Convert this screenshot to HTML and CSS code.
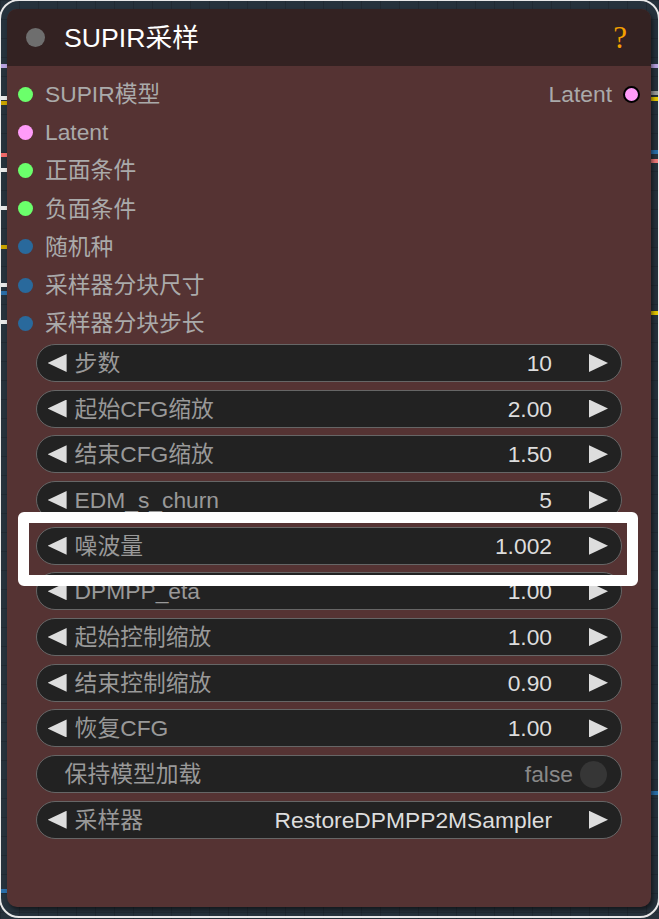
FILE: index.html
```html
<!DOCTYPE html>
<html>
<head>
  <title>SUPIR采样</title>
  <link rel="stylesheet" href="styles.css">
</head>
<body>
  <div class="canvas">
    <!-- wire stubs peeking out behind the node -->
    <div class="wire wl" style="top:64px;background:#b9a3e0"></div>
    <div class="wire wl" style="top:96px;background:#e8e8e8"></div>
    <div class="wire wl" style="top:101px;background:#c9a400"></div>
    <div class="wire wl" style="top:153px;background:#f06a6a"></div>
    <div class="wire wl" style="top:168px;background:#e8e8e8"></div>
    <div class="wire wl" style="top:206px;background:#e8e8e8"></div>
    <div class="wire wl" style="top:245px;background:#c9a400"></div>
    <div class="wire wl" style="top:283px;background:#e8e8e8"></div>
    <div class="wire wl" style="top:291px;background:#2a6ea8"></div>
    <div class="wire wl" style="top:320px;background:#e8e8e8"></div>
    <div class="wire wl" style="top:889px;background:#2a6ea8"></div>
    <div class="wire wr" style="top:64px;background:#b9a3e0"></div>
    <div class="wire wr" style="top:91px;background:#9a9a9a"></div>
    <div class="wire wr" style="top:97px;background:#e6c800"></div>
    <div class="wire wr" style="top:150px;background:#2a6ea8"></div>
    <div class="wire wr" style="top:159px;background:#f07a7a"></div>
    <div class="wire wr" style="top:311px;background:#e6c800"></div>
    <div class="wire wr" style="top:791px;background:#2a6ea8"></div>

    <div class="node">
      <div class="node-title">
        <span class="title-dot"></span>
        <span class="title-text">SUPIR采样</span>
        <span class="help">?</span>
      </div>

      <div class="slots">
        <div class="slot">
          <span class="dot green"></span><span class="slot-label">SUPIR模型</span>
          <span class="out-label">Latent</span><span class="dot pink out"></span>
        </div>
        <div class="slot"><span class="dot pink"></span><span class="slot-label">Latent</span></div>
        <div class="slot"><span class="dot green"></span><span class="slot-label">正面条件</span></div>
        <div class="slot"><span class="dot green"></span><span class="slot-label">负面条件</span></div>
        <div class="slot"><span class="dot blue"></span><span class="slot-label">随机种</span></div>
        <div class="slot"><span class="dot blue"></span><span class="slot-label">采样器分块尺寸</span></div>
        <div class="slot"><span class="dot blue"></span><span class="slot-label">采样器分块步长</span></div>
      </div>

      <div class="widgets">
        <div class="widget"><span class="arrow left"></span><span class="w-label">步数</span><span class="w-value">10</span><span class="arrow right"></span></div>
        <div class="widget"><span class="arrow left"></span><span class="w-label">起始CFG缩放</span><span class="w-value">2.00</span><span class="arrow right"></span></div>
        <div class="widget"><span class="arrow left"></span><span class="w-label">结束CFG缩放</span><span class="w-value">1.50</span><span class="arrow right"></span></div>
        <div class="widget"><span class="arrow left"></span><span class="w-label">EDM_s_churn</span><span class="w-value">5</span><span class="arrow right"></span></div>
        <div class="widget"><span class="arrow left"></span><span class="w-label">噪波量</span><span class="w-value">1.002</span><span class="arrow right"></span></div>
        <div class="widget"><span class="arrow left"></span><span class="w-label">DPMPP_eta</span><span class="w-value">1.00</span><span class="arrow right"></span></div>
        <div class="widget"><span class="arrow left"></span><span class="w-label">起始控制缩放</span><span class="w-value">1.00</span><span class="arrow right"></span></div>
        <div class="widget"><span class="arrow left"></span><span class="w-label">结束控制缩放</span><span class="w-value">0.90</span><span class="arrow right"></span></div>
        <div class="widget"><span class="arrow left"></span><span class="w-label">恢复CFG</span><span class="w-value">1.00</span><span class="arrow right"></span></div>
        <div class="widget toggle"><span class="w-label">保持模型加载</span><span class="t-value">false</span><span class="knob"></span></div>
        <div class="widget"><span class="arrow left"></span><span class="w-label">采样器</span><span class="w-value">RestoreDPMPP2MSampler</span><span class="arrow right"></span></div>
      </div>
    </div>

    <div class="highlight"></div>
  </div>
</body>
</html>
```

FILE: styles.css
```css
body {
  margin: 0;
  padding: 0;
  background-color: #26323c;
  background-image:
    linear-gradient(rgba(0, 0, 0, 0.14) 1px, transparent 1px),
    linear-gradient(90deg, rgba(0, 0, 0, 0.14) 1px, transparent 1px);
  background-size: 19px 19px;
  font-family: "Liberation Sans", Arial, "Noto Sans CJK SC", sans-serif;
  overflow: hidden;
}

.canvas {
  position: relative;
  width: 659px;
  height: 919px;
  padding: 9px 0 0 7px;
  box-sizing: border-box;
  overflow: hidden;
}

.wire {
  position: absolute;
  height: 4px;
  width: 8px;
}

.wl { left: 0; }
.wr { right: 0; }

.node {
  position: relative;
  width: 644px;
  height: 898px;
  background-color: #553333;
  border-radius: 10px;
  box-shadow: 2px 3px 4px rgba(0, 0, 0, 0.5);
}

/* selection outline */
.node::before {
  content: "";
  position: absolute;
  top: -10px;
  left: -8px;
  right: -9px;
  bottom: -11px;
  border: 2px solid #e8e8e8;
  border-radius: 20px;
}

.node-title {
  display: flex;
  align-items: center;
  height: 57px;
  background-color: #332222;
  border-radius: 10px 10px 0 0;
  padding: 0 24px 0 19px;
}

.title-dot {
  width: 19px;
  height: 19px;
  border-radius: 50%;
  background-color: #6e6e6e;
}

.title-text {
  flex: 1;
  margin-left: 19px;
  font-size: 26.7px;
  line-height: 30px;
  color: #fff;
}

.help {
  font-family: "Liberation Serif", "Times New Roman", serif;
  font-size: 31px;
  line-height: 30px;
  color: #f5a000;
}

.slots {
  padding-top: 9px;
}

.slot {
  display: flex;
  align-items: center;
  height: 38.2px;
  padding: 0 11px 0 11px;
  font-size: 22.8px;
  line-height: 26px;
  color: #aaa;
}

.dot {
  width: 15px;
  height: 15px;
  border-radius: 50%;
  flex-shrink: 0;
}

.green { background-color: #6bff6b; }
.pink { background-color: #ff9cf9; }
.blue { background-color: #29699c; }

.slot-label {
  flex: 1;
  margin-left: 12px;
}

.out-label {
  margin-right: 11px;
}

.dot.out {
  width: 13px;
  height: 13px;
  border: 2px solid #000;
  margin-right: 0;
}

.widgets {
  display: flex;
  flex-direction: column;
  gap: 7.7px;
  margin-top: 1.6px;
  padding: 0 29px 0 28.6px;
}

.widget {
  display: flex;
  align-items: center;
  height: 38px;
  box-sizing: border-box;
  border: 1px solid #666;
  border-radius: 19px;
  background-color: #222;
  padding: 0 13px 0 11px;
  font-size: 22.8px;
  line-height: 26px;
}

.arrow {
  width: 19px;
  height: 18px;
  background-color: #ddd;
  flex-shrink: 0;
}

.arrow.left {
  clip-path: polygon(0 50%, 100% 0, 100% 100%);
}

.arrow.right {
  clip-path: polygon(0 0, 100% 50%, 0 100%);
  margin-left: 37px;
}

.w-label {
  flex: 1;
  margin-left: 8px;
  color: #999;
  white-space: nowrap;
}

.w-value {
  color: #ddd;
  white-space: nowrap;
}

.toggle {
  padding-left: 28px;
  padding-right: 14px;
}

.toggle .w-label {
  margin-left: 0;
}

.t-value {
  color: #888;
}

.knob {
  width: 27px;
  height: 27px;
  border-radius: 50%;
  background-color: #363636;
  margin-left: 7px;
}

/* annotation box drawn over the screenshot */
.highlight {
  position: absolute;
  left: 18px;
  top: 512px;
  width: 620px;
  height: 74px;
  box-sizing: border-box;
  border: 11px solid #fff;
  border-radius: 6px;
}
```
